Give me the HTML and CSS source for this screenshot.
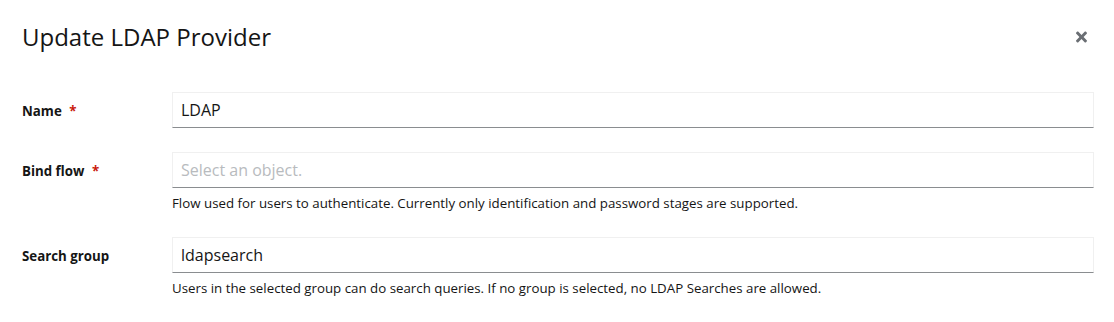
FILE: index.html
```html
<!DOCTYPE html>
<html lang="en">
<head>
  <meta charset="UTF-8">
  <title>Update LDAP Provider</title>
  <link rel="stylesheet" href="styles.css">
</head>
<body>

<div class="modal">
  <header class="modal-header">
    <h1>Update LDAP Provider</h1>
    <button class="close" aria-label="Close">
      <svg viewBox="0 0 352 512" width="11" height="16"><path fill="currentColor" d="M242.72 256l100.07-100.07c12.28-12.28 12.28-32.19 0-44.48l-22.24-22.240c-12.28-12.28-32.19-12.28-44.48 0L176 189.28 75.93 89.21c-12.28-12.28-32.19-12.28-44.48 0L9.21 111.45c-12.28 12.28-12.28 32.19 0 44.48L109.28 256 9.21 356.07c-12.28 12.28-12.28 32.19 0 44.48l22.24 22.24c12.28 12.28 32.2 12.28 44.48 0L176 322.72l100.07 100.07c12.28 12.28 32.2 12.28 44.48 0l22.24-22.24c12.28-12.28 12.28-32.19 0-44.48L242.72 256z"/></svg>
    </button>
  </header>

  <form class="form">
    <div class="form-row">
      <label for="name">Name <span class="req">*</span></label>
      <div class="field">
        <input type="text" id="name" value="LDAP">
      </div>
    </div>

    <div class="form-row">
      <label for="flow">Bind flow <span class="req">*</span></label>
      <div class="field">
        <input type="text" id="flow" placeholder="Select an object.">
        <p class="helper">Flow used for users to authenticate. Currently only identification and password stages are supported.</p>
      </div>
    </div>

    <div class="form-row">
      <label for="group">Search group</label>
      <div class="field">
        <input type="text" id="group" value="ldapsearch">
        <p class="helper">Users in the selected group can do search queries. If no group is selected, no LDAP Searches are allowed.</p>
      </div>
    </div>
  </form>
</div>

</body>
</html>
```

FILE: styles.css
```css
body {
  margin: 0;
  font-family: "Open Sans", "Liberation Sans", sans-serif;
  color: #151515;
  background: #fff;
}

.modal {
  padding: 19px 20px 0 22px;
}

.modal-header {
  display: flex;
  align-items: center;
  justify-content: space-between;
}

.modal-header h1 {
  margin: 0;
  font-size: 24px;
  font-weight: 400;
  line-height: 36px;
}

.close {
  background: none;
  border: none;
  padding: 0 7px 0 0;
  margin-top: 3px;
  color: #6a6e73;
  cursor: pointer;
}

.form {
  margin-top: 37px;
  display: flex;
  flex-direction: column;
  gap: 24px;
}

.form-row {
  display: grid;
  grid-template-columns: 150px 1fr;
}

.form-row label {
  font-size: 13.3px;
  font-weight: 700;
  line-height: 21px;
  padding-top: 9px;
}

.req {
  color: #c9190b;
  margin-left: 4px;
}

.field input {
  box-sizing: border-box;
  width: 100%;
  height: 36px;
  padding: 5px 8px;
  font-family: inherit;
  font-size: 16px;
  color: #151515;
  border: 1px solid #f0f0f0;
  border-bottom-color: #8a8d90;
  outline: none;
}

.field input::placeholder {
  color: #b8bbbe;
}

.helper {
  margin: 5px 0 0;
  font-size: 13.3px;
  line-height: 20px;
}
```
